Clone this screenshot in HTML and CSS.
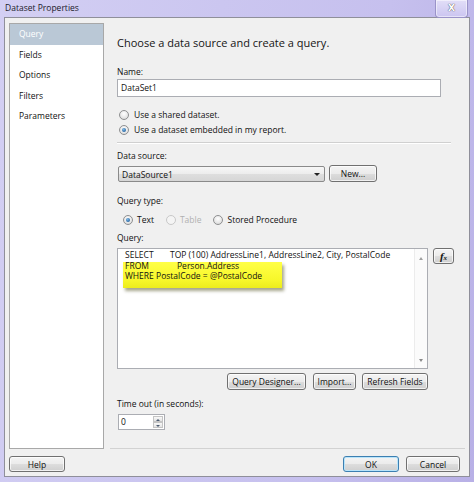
FILE: index.html
```html
<!DOCTYPE html>
<html>
<head>
<meta charset="utf-8">
<link rel="stylesheet" href="styles.css">
</head>
<body>
<div class="window">
  <div class="titlebar">
    <span class="title">Dataset Properties</span>
    <div class="close"><span>X</span></div>
  </div>
  <div class="client">
    <div class="content">
      <nav class="nav">
        <div class="nav-item selected">Query</div>
        <div class="nav-item">Fields</div>
        <div class="nav-item">Options</div>
        <div class="nav-item">Filters</div>
        <div class="nav-item">Parameters</div>
      </nav>
      <main class="main">
        <div class="heading">Choose a data source and create a query.</div>
        <div class="label name-label">Name:</div>
        <div class="textbox name-box">DataSet1</div>
        <div class="radio-group">
          <div class="radio-row"><span class="radio"></span><span>Use a shared dataset.</span></div>
          <div class="radio-row"><span class="radio on"></span><span>Use a dataset embedded in my report.</span></div>
        </div>
        <div class="hr"></div>
        <div class="label ds-label">Data source:</div>
        <div class="ds-row">
          <div class="combo"><span>DataSource1</span><span class="combo-arrow"></span></div>
          <div class="btn new-btn">New...</div>
        </div>
        <div class="label qt-label">Query type:</div>
        <div class="qt-row">
          <span class="radio on"></span><span class="qt-text">Text</span>
          <span class="radio disabled"></span><span class="qt-text disabled-text">Table</span>
          <span class="radio"></span><span class="qt-text">Stored Procedure</span>
        </div>
        <div class="label q-label">Query:</div>
        <div class="q-row">
          <div class="qbox">
            <div class="qtext">
              <div class="highlight"></div>
              <div class="qline"><span class="kw kw-select">SELECT</span><span>TOP (100) AddressLine1, AddressLine2, City, PostalCode</span></div>
              <div class="qline"><span class="kw kw-from">FROM</span><span>Person.Address</span></div>
              <div class="qline"><span>WHERE PostalCode = @PostalCode</span></div>
            </div>
            <div class="vscroll">
              <span class="arrow-up"></span>
              <span class="arrow-down"></span>
            </div>
          </div>
          <div class="btn fx-btn"><span class="fx">f<span class="fx-x">x</span></span></div>
        </div>
        <div class="q-buttons">
          <div class="btn qd-btn">Query Designer...</div>
          <div class="btn imp-btn">Import...</div>
          <div class="btn rf-btn">Refresh Fields</div>
        </div>
        <div class="label to-label">Time out (in seconds):</div>
        <div class="spinner">
          <span class="spin-val">0</span>
          <div class="spin-btns">
            <span class="spin-up"></span>
            <span class="spin-down"></span>
          </div>
        </div>
      </main>
    </div>
    <div class="footer">
      <div class="btn help-btn">Help</div>
      <div class="footer-right">
        <div class="btn ok-btn">OK</div>
        <div class="btn cancel-btn">Cancel</div>
      </div>
    </div>
  </div>
</div>
</body>
</html>
```
FILE: styles.css
```css
* { box-sizing: border-box; }
html, body { margin: 0; padding: 0; }
body {
  width: 474px;
  height: 482px;
  overflow: hidden;
  font-family: "Open Sans", "Noto Sans", sans-serif;
  font-size: 8.5px;
  color: #111;
  background: #c4beec;
}
.window {
  display: flex;
  flex-direction: column;
  height: 482px;
  padding: 0 4px 5px 4px;
  background: linear-gradient(100deg, #d3cff3 0%, #cbc6f0 40%, #c6c0ee 70%, #b8b0e6 100%);
}
.titlebar {
  height: 17px;
  position: relative;
  display: flex;
  align-items: center;
  padding-left: 1px;
  flex: none;
}
.title {
  font-size: 8.5px;
  color: #1b1b2a;
  margin-top: -2px;
}
.close {
  position: absolute;
  right: 2px;
  top: 0;
  width: 33px;
  height: 18px;
  border: 1px solid #9a93c8;
  border-top: none;
  border-radius: 0 0 4px 4px;
  background: linear-gradient(180deg, #e2def8 0%, #cbc5f0 100%);
  box-shadow: inset 0 0 0 1px rgba(255,255,255,0.5);
  display: flex;
  align-items: center;
  justify-content: center;
  z-index: 2;
}
.close span {
  font-family: "DejaVu Sans", sans-serif;
  font-size: 9px;
  font-weight: bold;
  color: #fff;
  text-shadow: 0 0 1px #555, 0 0 1px #555;
  margin-top: -2px;
}
.client {
  flex: 1;
  border: 1px solid #8f8f9a;
  background: #f0f0f0;
  padding: 5px 4px 4px 4px;
  display: flex;
  flex-direction: column;
}
.content {
  display: flex;
  height: 426px;
  flex: none;
}
.nav {
  flex: none;
  width: 95px;
  border: 1px solid #a8a8a8;
  background: #fff;
}
.nav-item {
  height: 20.5px;
  line-height: 20.5px;
  padding-left: 9px;
  color: #111;
}
.nav-item.selected {
  background: #bac8d6;
  color: #fff;
}
.main {
  flex: 1;
  min-width: 0;
  margin-left: 6px;
  padding: 0 14px 0 7px;
  border-bottom: 1px solid #d2d2d2;
}
.heading {
  margin-top: 13px;
  font-size: 11px;
  line-height: 14px;
  color: #151515;
}
.label {
  line-height: 12px;
  color: #111;
}
.name-label { margin-top: 16px; }
.textbox {
  height: 18px;
  border: 1px solid #abadb3;
  background: #fff;
  padding-left: 3px;
  line-height: 16px;
}
.name-box {
  margin-top: 1px;
  margin-right: 10px;
}
.radio-group { margin-top: 10px; padding-left: 2px; }
.radio-row {
  height: 15px;
  display: flex;
  align-items: center;
}
.radio {
  display: inline-block;
  width: 10px;
  height: 10px;
  border-radius: 50%;
  border: 1px solid #8e8f90;
  background: radial-gradient(circle at 50% 35%, #ffffff 0%, #e6e6e6 60%, #d0d0d0 100%);
  position: relative;
  flex: none;
  margin-right: 5px;
}
.radio.on::after {
  content: "";
  position: absolute;
  left: 2px;
  top: 2px;
  width: 4px;
  height: 4px;
  border-radius: 50%;
  background: radial-gradient(circle at 40% 35%, #7fb8e6 0%, #2b6aa6 70%, #1c4c82 100%);
}
.radio.disabled {
  border-color: #c8c8c8;
  background: #f4f4f4;
}
.hr {
  margin-top: 5px;
  height: 2px;
  border-top: 1px solid #d0d0d0;
  border-bottom: 1px solid #ffffff;
}
.ds-label { margin-top: 6px; }
.ds-row {
  margin-top: 3px;
  display: flex;
  align-items: flex-start;
  height: 17px;
}
.combo {
  margin-left: 1px;
  width: 207px;
  height: 16px;
  margin-top: 1px;
  border: 1px solid #8a8a8a;
  border-radius: 2px;
  background: linear-gradient(180deg, #f7f7f7 0%, #ececec 50%, #dedede 51%, #d6d6d6 100%);
  display: flex;
  align-items: center;
  justify-content: space-between;
  padding: 0 4px 0 3px;
}
.combo-arrow {
  width: 0;
  height: 0;
  border-left: 3px solid transparent;
  border-right: 3px solid transparent;
  border-top: 3px solid #222;
}
.btn {
  height: 17px;
  border: 1px solid #707070;
  border-radius: 3px;
  background: linear-gradient(180deg, #f4f4f4 0%, #ebebeb 50%, #dddddd 51%, #cfcfcf 100%);
  box-shadow: inset 0 0 0 1px rgba(255,255,255,0.7);
  display: flex;
  align-items: center;
  justify-content: center;
  color: #111;
  flex: none;
}
.new-btn {
  margin-left: 4px;
  width: 48px;
}
.qt-label { margin-top: 13px; }
.qt-row {
  margin-top: 5px;
  height: 15px;
  display: flex;
  align-items: center;
  padding-left: 6px;
}
.qt-row .radio { margin-right: 4px; }
.qt-text { margin-right: 12px; }
.disabled-text { color: #b0b0b0; }
.q-label { margin-top: 5px; }
.q-row {
  margin-top: 4px;
  display: flex;
  align-items: flex-start;
}
.qbox {
  width: 311px;
  height: 121px;
  border: 1px solid #abadb3;
  background: #fff;
  display: flex;
  flex: none;
}
.qtext {
  flex: 1;
  position: relative;
  padding: 1px 0 0 7px;
  overflow: hidden;
}
.highlight {
  position: absolute;
  left: 5px;
  top: 13px;
  width: 159px;
  height: 26px;
  background: linear-gradient(180deg, #ffff46 0%, #f7f72a 70%, #ecec1c 100%);
  box-shadow: 2px 3px 3px rgba(60,60,0,0.45);
}
.qline {
  position: relative;
  line-height: 10.5px;
  white-space: nowrap;
  color: #111;
}
.kw { display: inline-block; }
.kw-select { width: 45px; }
.kw-from { width: 52px; }
.vscroll {
  width: 13px;
  flex: none;
  border-left: 1px solid #ececec;
  background: #fbfbfb;
  display: flex;
  flex-direction: column;
  justify-content: space-between;
  align-items: center;
  padding: 8px 0 6px;
}
.arrow-up, .arrow-down {
  width: 0;
  height: 0;
  border-left: 2.5px solid transparent;
  border-right: 2.5px solid transparent;
}
.arrow-up { border-bottom: 3px solid #a0a0a0; }
.arrow-down { border-top: 3px solid #8a8a8a; }
.fx-btn {
  margin-left: 5px;
  width: 21px;
  height: 16px;
}
.fx {
  font-family: "Liberation Serif", serif;
  font-style: italic;
  font-weight: bold;
  font-size: 11px;
  color: #111;
}
.fx-x { font-size: 7px; }
.q-buttons {
  margin-top: 4px;
  width: 311px;
  display: flex;
  justify-content: flex-end;
}
.qd-btn { width: 79px; }
.imp-btn { width: 43px; margin-left: 7px; }
.rf-btn { width: 66px; margin-left: 6px; }
.to-label { margin-top: 8px; }
.spinner {
  margin-top: 4px;
  margin-left: 1px;
  width: 47px;
  height: 16px;
  border: 1px solid #abadb3;
  background: #fff;
  display: flex;
  justify-content: space-between;
}
.spin-val {
  padding-left: 2px;
  line-height: 14px;
}
.spin-btns {
  width: 11px;
  display: flex;
  flex-direction: column;
  padding: 1px 1px 1px 0;
}
.spin-up, .spin-down {
  flex: 1;
  border: 1px solid #c4c4c4;
  background: linear-gradient(180deg, #f8f8f8, #e4e4e4);
  position: relative;
}
.spin-up::after, .spin-down::after {
  content: "";
  position: absolute;
  left: 2px;
  top: 1.5px;
  border-left: 2px solid transparent;
  border-right: 2px solid transparent;
}
.spin-up::after { border-bottom: 2.5px solid #4a5a70; }
.spin-down::after { border-top: 2.5px solid #4a5a70; }
.footer {
  margin-top: 7px;
  height: 16px;
  display: flex;
  justify-content: space-between;
  padding-right: 5px;
  flex: none;
}
.footer .btn { height: 16px; }
.help-btn { width: 56px; }
.footer-right { display: flex; }
.ok-btn {
  width: 56px;
  border-color: #3c7fb1;
  box-shadow: inset 0 0 0 1px #b9e4fa;
}
.cancel-btn { width: 54px; margin-left: 7px; }
```
